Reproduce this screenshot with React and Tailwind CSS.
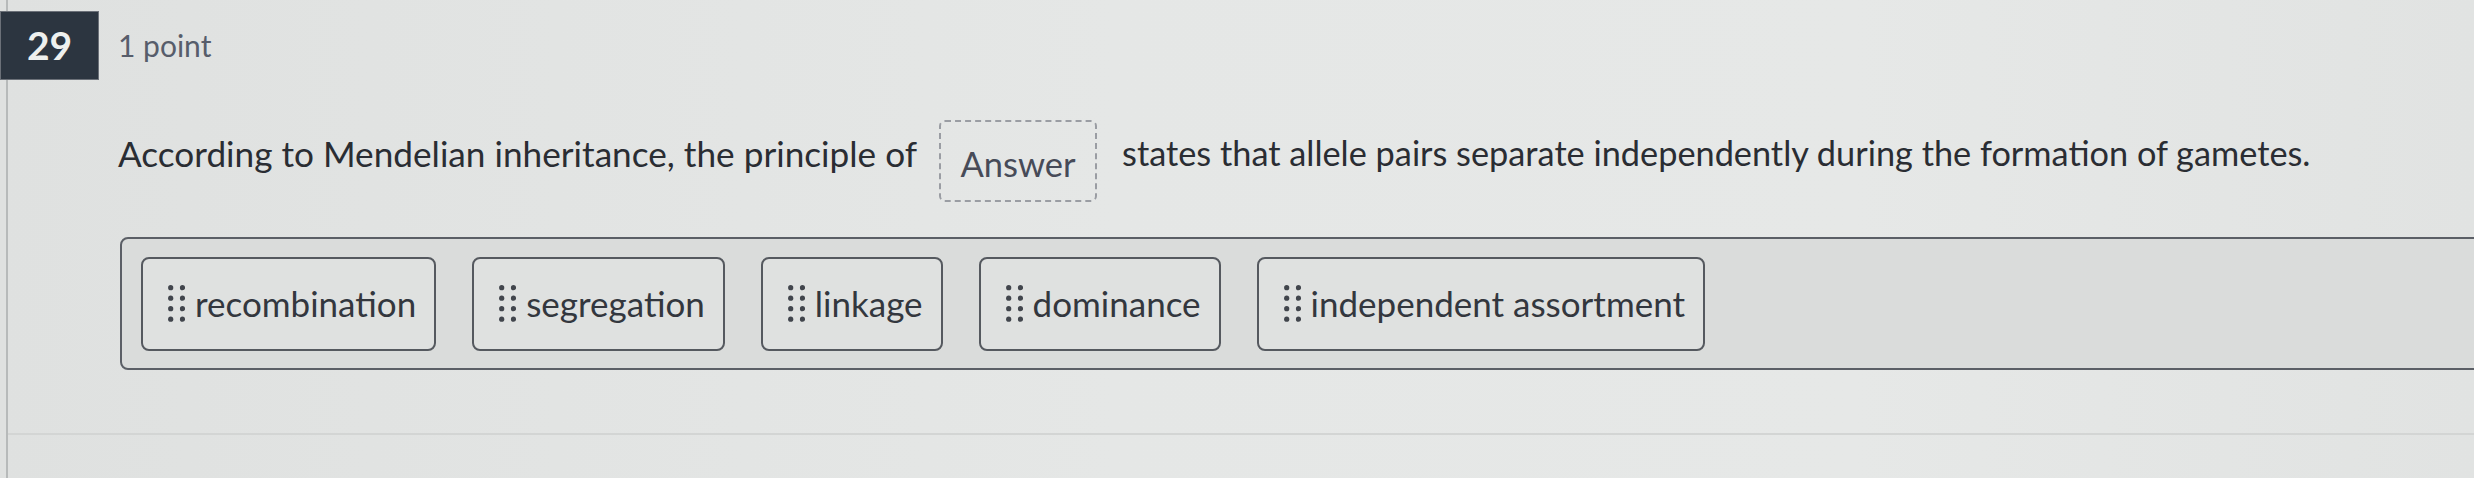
import React from "react";

function Handle() {
  const cols = [2.7, 14.5];
  const rows = [2.7, 13.2, 23.7, 34.2];
  return (
    <svg width="17" height="37" viewBox="0 0 17 37" className="shrink-0">
      {rows.map((y) =>
        cols.map((x) => <circle key={`${x}-${y}`} cx={x} cy={y} r="2.6" fill="#41454c" />)
      )}
    </svg>
  );
}

function Chip({ label }) {
  return (
    <div className="flex h-[94px] items-center gap-[10px] rounded-[8px] border-2 border-[#55595f] bg-[#dfe1e0] pl-[25px] pr-[18px]">
      <Handle />
      <span className="text-[35px] leading-none text-[#33373e]">{label}</span>
    </div>
  );
}

export default function App() {
  const options = ["recombination", "segregation", "linkage", "dominance", "independent assortment"];
  return (
    <div
      className="h-[478px] w-full overflow-hidden bg-[linear-gradient(90deg,#dfe1e0_0%,#e5e7e6_45%,#e6e8e7_75%,#e1e3e2_100%)]"
      style={{ fontFamily: "Lato, 'Noto Sans', sans-serif" }}
    >
      <div className="ml-[6px] h-full border-l-2 border-[#b7baba]">
        {/* header */}
        <div className="flex items-center pt-[11px]">
          <div className="-ml-[8px] flex h-[69px] w-[99px] items-center justify-center border border-[#6b7078] bg-[#2c3540] text-[39px] font-bold text-[#eef0ee]">
            29
          </div>
          <div className="ml-[19px] text-[30px] text-[#575d6b]">1 point</div>
        </div>

        {/* question */}
        <div className="ml-[110px] mt-[40px] flex items-start whitespace-nowrap text-[#2a2d33]">
          <span className="mt-[12px] text-[35.2px] leading-[1.2]">According to Mendelian inheritance, the principle of</span>
          <span className="ml-[22px] flex h-[82px] w-[158px] items-center justify-center rounded-[6px] border-2 border-dashed border-[#9a9da3] pt-[5px] text-[34.5px] leading-[1.2] text-[#474b58]">
            Answer
          </span>
          <span className="ml-[25px] mt-[12px] text-[34.3px] leading-[1.2]">
            states that allele pairs separate independently during the formation of gametes.
          </span>
        </div>

        {/* options panel */}
        <div className="ml-[112px] mt-[35px] flex h-[133px] w-[2420px] items-center gap-[36px] rounded-[8px] border-2 border-[#5b5f66] bg-[#dadcdb] pl-[19px]">
          {options.map((o) => (
            <Chip key={o} label={o} />
          ))}
        </div>

        {/* faint divider */}
        <div className="mt-[63px] h-[2px] w-full bg-[#d3d5d4]" />
      </div>
    </div>
  );
}
